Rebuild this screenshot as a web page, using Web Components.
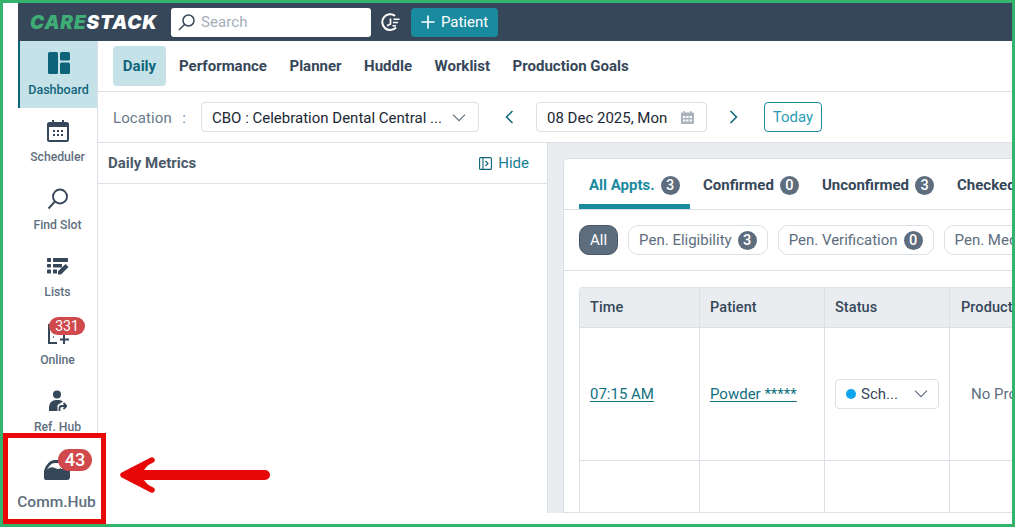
<!DOCTYPE html>
<html><head><meta charset="utf-8"><style>
html,body{margin:0;padding:0;background:#fff;font-family:Roboto,"Liberation Sans",sans-serif}
</style></head><body>
<cs-app>
<cs-topbar slot="top"></cs-topbar>
<cs-sidebar slot="side"></cs-sidebar>
<cs-tabs slot="tabs"></cs-tabs>
<cs-filter slot="filter"></cs-filter>
<cs-metrics slot="left"></cs-metrics>
<cs-appts slot="right"></cs-appts>
<cs-callout slot="over"></cs-callout>
</cs-app>
<script>
const def=(name,html)=>customElements.define(name,class extends HTMLElement{constructor(){super();this.attachShadow({mode:'open'}).innerHTML=html}});
const chev=(d,c='#5b6b7c',w=10,h=6)=>`<svg width="${w}" height="${h}" viewBox="0 0 10 6" fill="none" stroke="${c}" stroke-width=".8"><path d="${d}"/></svg>`;

def('cs-app',`<style>
:host{display:block;box-sizing:border-box;width:1015px;height:527px;border:3px solid #34b36f;position:relative;overflow:hidden;background:#fff}
.main{box-sizing:border-box;margin-left:15px;height:510px;display:flex;flex-direction:column;overflow:hidden}
.body{flex:1;display:flex;min-height:0}
.content{flex:1;min-width:0;display:flex;flex-direction:column;overflow:hidden}
.panes{flex:1;display:flex;min-height:0;overflow:hidden}
</style>
<div class="main"><slot name="top"></slot>
<div class="body"><slot name="side"></slot>
<div class="content"><slot name="tabs"></slot><slot name="filter"></slot>
<div class="panes"><slot name="left"></slot><slot name="right"></slot></div></div></div></div>
<slot name="over"></slot>`);

def('cs-topbar',`<style>
:host{display:flex;align-items:center;height:38px;background:#364759;flex:none;box-sizing:border-box;padding-left:12px}
.logo{font:italic 900 19px Inter,Lato,sans-serif;letter-spacing:.85px;width:141px;white-space:nowrap;color:#fff;flex:none}
.logo b{font-weight:900;color:#3fae76}
.search{box-sizing:border-box;width:200px;height:29px;background:#fff;border-radius:3px;display:flex;align-items:center;gap:6px;padding-left:7px;color:#a3adb7;font-size:15px;letter-spacing:.1px}
.clock{margin:0 11px 0 10px;display:block}
.btn{width:87px;height:29px;background:#1a8a9f;border-radius:4px;color:#fff;font-size:15px;display:flex;align-items:center;justify-content:center;gap:6px;box-sizing:border-box}
</style>
<div class="logo"><b>CARE</b>STACK</div>
<div class="search"><svg width="17" height="17" viewBox="0 0 17 17" fill="none" stroke="#364759" stroke-width="1.500"><circle cx="10.500" cy="6.500" r="5.500"/><path d="M6.500 10.500 1 16"/></svg>Search</div>
<svg class="clock" width="19" height="19" viewBox="0 0 19 19" fill="none" stroke="#fff" stroke-width="2"><path d="M15 14.500A7.900 7.900 0 1 1 14 2.900"/><path d="M9.500 5.500V11L6 12.800" stroke-width="1.700"/><path d="M12.500 6.300h6M12 9.500h5M11.500 12.700h3.500" stroke-width="1.600"/></svg>
<div class="btn"><svg width="14" height="14" viewBox="0 0 14 14" stroke="#fff" stroke-width="1.600"><path d="M7 .5v13M.5 7h13"/></svg>Patient</div>`);

customElements.define('cs-navitem',class extends HTMLElement{
constructor(){super();const r=this.attachShadow({mode:'open'});
r.innerHTML=`<style>
:host{display:flex;flex-direction:column;align-items:center;height:67.500px;box-sizing:border-box;padding-top:9px;color:#5f6f80;font-size:12.200px;font-weight:500;position:relative;white-space:nowrap}
:host([active]){background:#c5e2e9;color:#10647a;border-left:2px solid #0d6379;font-size:12.500px;height:67px;padding-top:8px}
.ic{height:28px;display:flex;align-items:center;justify-content:center;position:relative;margin-bottom:5px}
</style><div class="ic"><slot name="icon"></slot></div><slot></slot>`}});

def('cs-sidebar',`<style>
:host{display:block;width:80px;flex:none;box-sizing:border-box;border-right:1px solid #dcdfe5;background:#fff;position:relative}
.badge{position:absolute;left:31px;top:276px;width:36px;height:18px;border-radius:9px;background:#d04a4d;color:#fff;font-size:14px;line-height:18px;text-align:center}
</style>
<cs-navitem active><svg slot="icon" width="22" height="22" viewBox="0 0 22 22" fill="#0d6379"><rect width="10" height="22" rx="1.500"/><rect x="12" width="10" height="8.500" rx="1.500"/><rect x="12" y="10.500" width="10" height="11.500" rx="1.500"/></svg>Dashboard</cs-navitem>
<cs-navitem><svg slot="icon" width="22" height="22" viewBox="0 0 22 22"><path fill="#364759" d="M5 0h2v2h8V0h2v2h2.500A2.500 2.500 0 0 1 22 4.500V19.500A2.500 2.500 0 0 1 19.500 22H2.500A2.500 2.500 0 0 1 0 19.500V4.500A2.500 2.500 0 0 1 2.500 2H5z"/><rect x="2" y="7" width="18" height="13" fill="#fff"/><g fill="#364759"><rect x="6" y="10" width="2" height="2"/><rect x="10" y="10" width="2" height="2"/><rect x="14" y="10" width="2" height="2"/><rect x="6" y="14" width="2" height="2"/><rect x="10" y="14" width="2" height="2"/><rect x="14" y="14" width="2" height="2"/></g></svg>Scheduler</cs-navitem>
<cs-navitem><svg slot="icon" width="22" height="22" viewBox="0 0 22 22" fill="none" stroke="#364759" stroke-width="1.900"><circle cx="13" cy="8.500" r="7"/><path d="M8 13.500 1.500 20.500"/></svg>Find Slot</cs-navitem>
<cs-navitem><svg slot="icon" width="22" height="18" viewBox="0 0 22 18" fill="#364759"><rect y="1" width="4" height="4" rx=".8"/><rect x="6" y="1" width="15" height="4" rx=".6"/><rect y="7" width="4" height="3.500" rx=".8"/><rect x="6" y="7" width="9" height="3.500"/><rect y="12.500" width="4" height="4" rx=".8"/><rect x="6" y="12.500" width="4" height="4"/><path d="M11 17.500v-3.200L18.500 7l3 3-7.500 7.500z"/></svg>Lists</cs-navitem>
<cs-navitem><svg slot="icon" width="22" height="22" viewBox="0 0 22 22" fill="none" stroke="#364759" stroke-width="2"><path d="M2 1v19h8"/><path d="M17 12v9M13 16.500h9" stroke-width="2"/><path d="M6 14h1M6 10h1" stroke-width="1.500"/></svg>Online</cs-navitem>
<cs-navitem><svg slot="icon" width="18" height="22" viewBox="0 0 18 22"><circle cx="8" cy="4.500" r="4" fill="#364759"/><path fill="#364759" d="M0 21v-4a7 7 0 0 1 7-7h3a6 6 0 0 1 4 1.500L8.500 15v6z"/><path fill="none" stroke="#364759" stroke-width="1.800" d="M10.500 21v-2.500a2.500 2.500 0 0 1 2.500-2.500h4M14.500 13l3 3-3 3"/></svg>Ref. Hub</cs-navitem>
<div class="badge">331</div>`);

def('cs-tabs',`<style>
:host{display:flex;align-items:center;height:51px;box-sizing:border-box;border-bottom:1px solid #dcdfe5;padding:0 0 0 15px;gap:0;flex:none;font-size:15px;font-weight:700;color:#364759}
span{display:block;margin-right:22.500px;white-space:nowrap}
.on{background:#c5e2e9;color:#10647a;border-radius:4px;height:40px;line-height:40px;width:53px;text-align:center;margin-right:13px}
</style><span class="on">Daily</span><span>Performance</span><span>Planner</span><span>Huddle</span><span>Worklist</span><span style="margin:0">Production Goals</span>`);

def('cs-filter',`<style>
:host{display:flex;align-items:center;height:51px;box-sizing:border-box;border-bottom:1px solid #dcdfe5;padding-left:15px;flex:none;font-size:15px;color:#1f2933}
.l{color:#6a7a8a;width:88px;display:flex;justify-content:space-between;padding:1px 15px 0 0;box-sizing:border-box;letter-spacing:.1px}
.box{box-sizing:border-box;height:30px;border:1px solid #dcdfe5;border-radius:4px;display:flex;align-items:center;padding:1px 12px 0 10px;white-space:nowrap;background:#fff;color:#1b2733}
.sel{width:278px;justify-content:space-between}
.date{width:171px;justify-content:space-between;margin:0 21.500px 0 0}
.ch{display:flex;width:57px;justify-content:center;padding-left:4px;box-sizing:border-box}
.today{box-sizing:border-box;width:58px;height:30px;border:1px solid #1a8a9f;border-radius:4px;color:#2a9db5;text-align:center;line-height:28px}
</style>
<div class="l"><span>Location</span><span>:</span></div>
<div class="box sel"><span>CBO : Celebration Dental Central ...</span>${chev('M.5.500 5 5l4.500-4.500','#5b6b7c',14,8)}</div>
<div class="ch"><svg width="9" height="14" viewBox="0 0 9 14" fill="none" stroke="#0d6379" stroke-width="1.500"><path d="M7.500 1 1.500 7l6 6"/></svg></div>
<div class="box date"><span>08 Dec 2025, Mon</span><svg width="13" height="13" viewBox="0 0 13 13"><path fill="#aab3bd" d="M2.500 0h1.500v1.500h5V0h1.500v1.500H12a1 1 0 0 1 1 1V12a1 1 0 0 1-1 1H1a1 1 0 0 1-1-1V2.500a1 1 0 0 1 1-1h1.500z"/><g fill="#fff"><rect x="2" y="5" width="2.300" height="2"/><rect x="5.300" y="5" width="2.300" height="2"/><rect x="8.700" y="5" width="2.300" height="2"/><rect x="2" y="8.500" width="2.300" height="2"/><rect x="5.300" y="8.500" width="2.300" height="2"/><rect x="8.700" y="8.500" width="2.300" height="2"/></g></svg></div>
<svg style="margin-right:26.500px" width="9" height="14" viewBox="0 0 9 14" fill="none" stroke="#0d6379" stroke-width="1.500"><path d="M1.500 1l6 6-6 6"/></svg>
<div class="today">Today</div>`);

def('cs-metrics',`<style>
:host{display:block;width:450px;flex:none;box-sizing:border-box;border-right:1px solid #dcdfe5;background:#fff}
.h{height:41px;box-sizing:border-box;border-bottom:1px solid #dcdfe5;display:flex;align-items:center;justify-content:space-between;padding:0 18px 0 10px}
.t{font-size:15px;font-weight:700;color:#4a5a6a}
.hide{display:flex;align-items:center;gap:6px;color:#1a7f94;font-size:15px}
</style><div class="h"><span class="t">Daily Metrics</span><span class="hide"><svg width="13" height="13" viewBox="0 0 13 13" fill="none" stroke="#0d6379" stroke-width="1.100"><rect x=".6" y=".6" width="11.800" height="11.800" rx="1"/><path d="M4 .6v11.800M6.500 4l2.500 2.500-2.500 2.500"/></svg>Hide</span></div>`);

customElements.define('cs-count',class extends HTMLElement{constructor(){super();this.attachShadow({mode:'open'}).innerHTML=`<style>:host{display:inline-block;width:19px;height:19px;border-radius:50%;background:#5d6d7e;color:#fff;font-size:14.500px;font-weight:500;line-height:19px;text-align:center;flex:none}</style><slot></slot>`}});

customElements.define('cs-chip',class extends HTMLElement{constructor(){super();this.attachShadow({mode:'open'}).innerHTML=`<style>:host{display:flex;align-items:center;gap:6px;box-sizing:border-box;height:30px;padding:0 10px;border:1px solid #dcdfe5;border-radius:10px;color:#5d6d7e;font-size:15px;white-space:nowrap;flex:none;background:#fff}
:host([on]){background:#5d6d7e;border-color:#465768;color:#fff}</style><slot></slot>`}});

def('cs-appts',`<style>
:host{display:block;flex:1;min-width:0;background:#e9edf0;padding:15px 0 0 15px;box-sizing:border-box;overflow:hidden}
.card{background:#fff;border-radius:5px 0 0 0;border:1px solid #dcdfe5;border-right:0;height:100%;box-sizing:border-box;overflow:hidden}
.tabs{display:flex;height:51px;border-bottom:1px solid #dcdfe5;box-sizing:border-box;padding-left:15px;font-size:15px;font-weight:700;color:#364759;white-space:nowrap}
.t{display:flex;align-items:center;gap:6px;padding:2px 10px 0;height:50px;box-sizing:border-box;flex:none}
.t.on{color:#1a8a9f;border-bottom:5px solid #1a8a9f;width:111px;padding-top:7px;margin-right:3px}
.t+.t{margin-right:3px}
.chips{display:flex;align-items:center;gap:10px;height:61px;box-sizing:border-box;border-bottom:1px solid #dcdfe5;padding-left:15px}
.tw{padding:16px 0 0 15px}
table{border-collapse:separate;border-spacing:0;table-layout:fixed;width:600px;border-top:1px solid #dcdfe5;border-left:1px solid #dcdfe5;border-radius:4px 0 0 0;font-size:15px}
th,td{border-right:1px solid #dcdfe5;border-bottom:1px solid #dcdfe5;padding:0 10px;text-align:left;white-space:nowrap;overflow:hidden}
th{background:#e9edf0;height:40px;box-sizing:border-box;font-weight:500;color:#364759;font-size:14.500px;letter-spacing:.08px}
th:last-child{padding-left:11px}
td{height:133px;box-sizing:border-box;color:#5d6d7e}
a{color:#10707f;text-decoration:underline;text-underline-offset:2px}
.st{box-sizing:border-box;width:104px;height:30px;border:1px solid #dcdfe5;border-radius:4px;display:flex;align-items:center;padding:0 10px;justify-content:space-between;color:#364759}
.st span{display:flex;align-items:center;gap:5px}
i{display:block;width:10px;height:10px;border-radius:50%;background:#0ea5f0}
.np{padding-left:21px}
</style>
<div class="card">
<div class="tabs"><div class="t on">All Appts.<cs-count>3</cs-count></div><div class="t">Confirmed<cs-count>0</cs-count></div><div class="t">Unconfirmed<cs-count>3</cs-count></div><div class="t">Checked In</div></div>
<div class="chips"><cs-chip on>All</cs-chip><cs-chip>Pen. Eligibility<cs-count>3</cs-count></cs-chip><cs-chip>Pen. Verification<cs-count>0</cs-count></cs-chip><cs-chip>Pen. Medical</cs-chip></div>
<div class="tw"><table><colgroup><col style="width:120px"><col style="width:125px"><col style="width:125px"><col style="width:230px"></colgroup>
<tr><th>Time</th><th>Patient</th><th>Status</th><th>Production</th></tr>
<tr><td><a>07:15 AM</a></td><td><a>Powder *****</a></td><td><div class="st"><span><i></i>Sch...</span>${chev('M.5.500 5 5l4.500-4.500','#5b6b7c',14,8)}</div></td><td class="np">No Production</td></tr>
<tr><td></td><td></td><td></td><td></td></tr></table></div>
</div>`);

def('cs-callout',`<style>
:host{position:absolute;left:0;top:430px;width:103px;height:91px;box-sizing:border-box;border:5px solid #e80808;background:#fff;display:block}
.ic{position:absolute;left:35px;top:20px}
.b{position:absolute;left:50px;top:11px;width:34px;height:22px;border-radius:11px;background:#d04a4d;color:#fff;font-size:18px;font-weight:500;line-height:22px;text-align:center}
.l{position:absolute;left:4px;right:0;top:55px;text-align:center;font-size:15.500px;font-weight:500;color:#5f6f80}
svg.a{position:absolute;left:112px;top:18px;overflow:visible}
</style>
<svg class="ic" width="28" height="22" viewBox="0 0 28 22"><path fill="#364759" d="M1 20V13Q2.500 7 7 3.500 9 2 11.500 2H18v9h9v8a3 3 0 0 1-3 3H3q-2 0-2-2z"/><path fill="#fff" d="M4 11.500Q5.500 8 8.500 6 10 5 12 5H18v5q-3 2-6 0-4-2-8 1.500z"/></svg>
<div class="b">43</div><div class="l">Comm.Hub</div>
<svg class="a" width="150" height="38" viewBox="0 0 150 38" fill="none" stroke="#e80808" stroke-linecap="round" stroke-linejoin="round"><path d="M14 19H145" stroke-width="10"/><path d="M32 4 3 19l29 15" stroke-width="5.500"/><path d="M3 19 32 4 20 19l12 15z" fill="#e80808" stroke="none"/></svg>`);
</script>
</body></html>
